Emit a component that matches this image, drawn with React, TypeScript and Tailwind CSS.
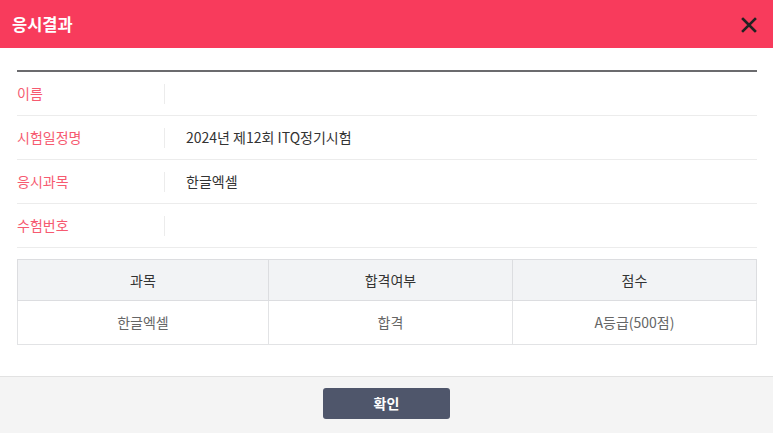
import React from "react";

const font = { fontFamily: '"Noto Sans CJK KR", "Noto Sans", sans-serif' };

function InfoRow({ label, value }: { label: string; value?: string }) {
  return (
    <div className="flex h-[44px] items-center border-b border-[#ececec]">
      <div className="w-[147px] text-[14px] text-[#f65a70]">{label}</div>
      <div className="h-[20px] w-px bg-[#ececec]" />
      <div className="pl-[21px] text-[14px] text-[#333]">{value}</div>
    </div>
  );
}

export default function App() {
  return (
    <div className="flex h-[433px] w-[773px] flex-col bg-white" style={font}>
      <div className="flex h-[48px] shrink-0 items-center justify-between bg-[#f83b5c] pl-[12px] pr-[16px]">
        <div className="text-[16.5px] font-bold text-white">응시결과</div>
        <svg width="16" height="16" viewBox="0 0 16 16" className="mt-[1px]">
          <path d="M2 2 L14 14 M14 2 L2 14" stroke="#222" strokeWidth="2.6" strokeLinecap="square" />
        </svg>
      </div>
      <div className="flex-1 px-[17px] pr-[16px] pt-[22px]">
        <div className="h-[2px] bg-[#6b6b6e]" />
        <InfoRow label="이름" />
        <InfoRow label="시험일정명" value="2024년 제12회 ITQ정기시험" />
        <InfoRow label="응시과목" value="한글엑셀" />
        <InfoRow label="수험번호" />
        <table className="mt-[11px] w-full border-collapse text-[14px]">
          <thead>
            <tr className="h-[41px] bg-[#f2f3f5]">
              <th className="w-[251px] border border-[#dcdde0] font-normal text-[#333]">과목</th>
              <th className="w-[244px] border border-[#dcdde0] font-normal text-[#333]">합격여부</th>
              <th className="border border-[#dcdde0] font-normal text-[#333]">점수</th>
            </tr>
          </thead>
          <tbody>
            <tr className="h-[44px]">
              <td className="border border-[#e2e3e5] text-center text-[#666]">한글엑셀</td>
              <td className="border border-[#e2e3e5] text-center text-[#666]">합격</td>
              <td className="border border-[#e2e3e5] text-center text-[#666]">A등급(500점)</td>
            </tr>
          </tbody>
        </table>
      </div>
      <div className="flex h-[57px] shrink-0 items-start justify-center border-t border-[#e2e2e2] bg-[#f4f4f4] pt-[11px]">
        <button className="h-[31px] w-[127px] rounded-[3px] bg-[#4f566b] text-[14px] font-bold text-white">
          확인
        </button>
      </div>
    </div>
  );
}
